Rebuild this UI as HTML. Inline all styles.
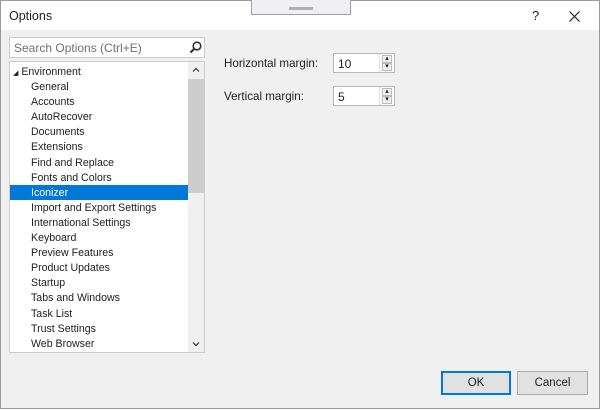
<!DOCTYPE html>
<html><head><style>
*{margin:0;padding:0;box-sizing:border-box}
body{width:600px;height:410px;background:#fff;font-family:"Liberation Sans",sans-serif;font-size:11px;color:#1e1e1e;position:relative;overflow:hidden}
.win{position:absolute;left:0;top:0;width:600px;height:409px;border:1px solid #9a9a9a;background:#f0f0f0}
.title{position:absolute;left:0;top:0;width:598px;height:29px;background:#fff}
.abs{position:absolute}
.tree div{height:15.1px;line-height:15px;padding-left:21px;white-space:nowrap;font-size:10.6px}
.spin{position:absolute;width:62px;height:20px;background:#fff;border:1px solid #b8b8b8}
.spin span{position:absolute;left:4px;top:3px;font-size:12px}
.sb{position:absolute;right:0;top:0;width:15px;height:18px;border-left:1px solid #ddd;background:#fafafa}
.sb i{position:absolute;left:2px;width:10px;height:8px;border:1px solid #bbb;background:#f0f0f0;font-size:7px;line-height:6px;text-align:center;font-style:normal}
.btn{position:absolute;height:24px;background:#e1e1e1;border:1px solid #adadad;text-align:center;line-height:22px;font-size:11.5px}
</style></head><body>
<div class="win">
<div class="title"></div>
<div class="abs" style="left:250px;top:-1px;width:100px;height:15px;background:#f0f0f4;border:1px solid #a0a0a0;border-top:none"></div>
<div class="abs" style="left:288px;top:6px;width:24px;height:3px;background:#b0b0b0"></div>
<div class="abs" style="left:8px;top:8px;font-size:12.5px">Options</div>
<div class="abs" style="left:531px;top:7px;font-size:13px">?</div>
<svg class="abs" style="left:568px;top:10px" width="11" height="11"><path d="M0.5 0.5L10.5 10.5M10.5 0.5L0.5 10.5" stroke="#222" stroke-width="1.2"/></svg>
<div class="abs" style="left:8px;top:36px;width:196px;height:21px;background:#fff;border:1px solid #ccc"></div>
<div class="abs" style="left:13px;top:40px;font-size:12px;color:#707070">Search Options (Ctrl+E)</div>
<svg class="abs" style="left:188px;top:40px" width="13" height="13"><circle cx="8" cy="5" r="3.8" fill="none" stroke="#333" stroke-width="1.6"/><path d="M5.5 7.5L1.5 11.5" stroke="#333" stroke-width="2.2"/></svg>
<div class="abs" style="left:8px;top:60px;width:196px;height:292px;background:#fff;border:1px solid #ccc;overflow:hidden">
 <div class="abs" style="left:178px;top:0;width:16px;height:290px;background:#f0f0f0"></div>
 <div class="abs" style="left:178px;top:17px;width:16px;height:114px;background:#cdcdcd"></div>
 <svg class="abs" style="left:182px;top:5px" width="8" height="6"><path d="M1 4.5L4 1.5L7 4.5" fill="none" stroke="#333" stroke-width="1.2"/></svg>
 <svg class="abs" style="left:182px;top:279px" width="8" height="6"><path d="M1 1.5L4 4.5L7 1.5" fill="none" stroke="#333" stroke-width="1.2"/></svg>
 <div class="abs" style="left:0;top:123px;width:178px;height:15px;background:#0078d7"></div>
 <div class="tree abs" style="left:0;top:3px;width:178px">
  <div style="padding-left:3px"><span style="font-size:7px">&#9698;</span> Environment</div>
  <div>General</div><div>Accounts</div><div>AutoRecover</div><div>Documents</div><div>Extensions</div><div>Find and Replace</div><div>Fonts and Colors</div><div style="color:#fff">Iconizer</div><div>Import and Export Settings</div><div>International Settings</div><div>Keyboard</div><div>Preview Features</div><div>Product Updates</div><div>Startup</div><div>Tabs and Windows</div><div>Task List</div><div>Trust Settings</div><div>Web Browser</div>
 </div>
</div>
<div class="abs" style="left:223px;top:56px;font-size:11.6px">Horizontal margin:</div>
<div class="abs" style="left:223px;top:89px;font-size:11.6px">Vertical margin:</div>
<div class="spin" style="left:332px;top:52px"><span>10</span><div class="sb"><i style="top:1px">&#9652;</i><i style="top:9px">&#9662;</i></div></div>
<div class="spin" style="left:332px;top:85px"><span>5</span><div class="sb"><i style="top:1px">&#9652;</i><i style="top:9px">&#9662;</i></div></div>
<div class="btn" style="left:440px;top:370px;width:70px;border:1px solid #0078d7;box-shadow:inset 0 0 0 1px #0078d7">OK</div>
<div class="btn" style="left:516px;top:370px;width:71px">Cancel</div>
</div>
</body></html>
